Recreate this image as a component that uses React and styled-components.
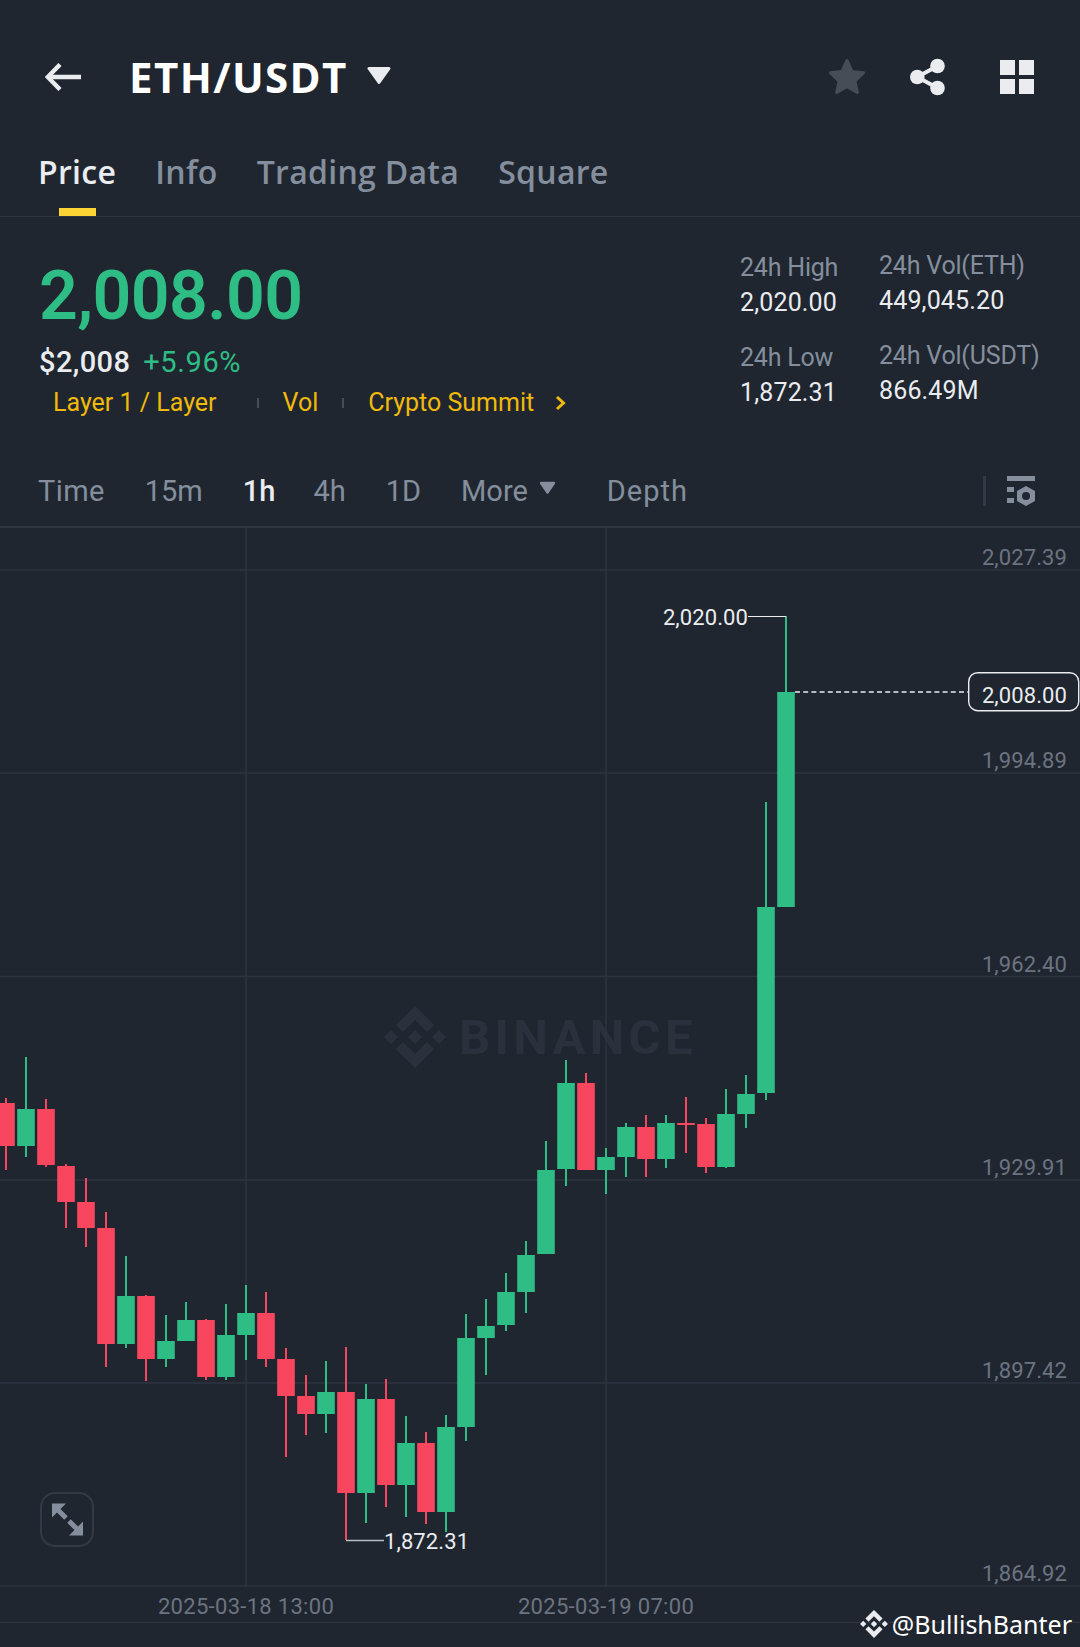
import React from "react";
import styled, { createGlobalStyle } from "styled-components";

const GREEN = "#2ebd85";
const RED = "#f8465f";
const GRID = "#2e353f";
const BG = "#1f2630";

const Global = createGlobalStyle`
  html, body { margin: 0; padding: 0; background: ${BG}; }
  * { box-sizing: border-box; }
`;

const Page = styled.div`
  position: relative;
  width: 1080px;
  height: 1647px;
  overflow: hidden;
  background: ${BG};
  display: flex;
  flex-direction: column;
  font-family: Roboto, "Liberation Sans", sans-serif;
  color: #eaecef;
`;

const TopBar = styled.header`
  height: 154px;
  display: flex;
  align-items: center;
  padding: 0 46px 0 45px;
`;
const Title = styled.h1`
  margin: 0 0 0 48px;
  font-family: "Open Sans", Roboto, sans-serif;
  font-size: 42px;
  font-weight: 700;
  letter-spacing: 1.4px;
  line-height: 48px;
  color: #fff;
`;
const TitleCaret = styled.svg`
  margin-left: 19px;
  width: 24px;
  height: 19px;
  margin-top: -4px;
`;
const TopIcons = styled.div`
  margin-left: auto;
  display: flex;
  align-items: center;
  gap: 44px;
`;
const GridIcon = styled.svg`
  margin-left: 11px;
`;

const TabRow = styled.nav`
  height: 63px;
  display: flex;
  padding: 0 0 0 38px;
  gap: 39px;
  border-bottom: 1px solid ${GRID};
`;
const Tab = styled.div`
  position: relative;
  font-family: "Open Sans", Roboto, sans-serif;
  font-size: 32px;
  font-weight: 600;
  letter-spacing: 0.3px;
  line-height: 36px;
  color: ${(p) => (p.$active ? "#eaecef" : "#848e9c")};
  ${(p) =>
    p.$active &&
    `&::after {
      content: "";
      position: absolute;
      left: 21px;
      top: 54px;
      width: 37px;
      height: 8px;
      background: #fcd535;
    }`}
`;

const Info = styled.section`
  height: 239px;
  display: flex;
  justify-content: space-between;
`;
const PriceBlock = styled.div`
  padding: 45px 0 0 39px;
`;
const BigPrice = styled.div`
  font-size: 68px;
  font-weight: 600;
  line-height: 68px;
  letter-spacing: -0.6px;
  color: ${GREEN};
`;
const SubRow = styled.div`
  margin-top: 17px;
  display: flex;
  gap: 13px;
  font-size: 29px;
  line-height: 30px;
  font-weight: 400;
`;
const Fiat = styled.span`
  color: #eaecef;
  font-weight: 500;
  letter-spacing: 0.4px;
`;
const Change = styled.span`
  color: ${GREEN};
  letter-spacing: 0.6px;
`;
const Tags = styled.div`
  margin: 12px 0 0 14px;
  display: flex;
  align-items: center;
  font-size: 25px;
  line-height: 28px;
  color: #f0b90b;
`;
const TagSep = styled.span`
  width: 2px;
  height: 10px;
  background: #474d57;
  margin: 0 24px 0 ${(p) => p.$left || 24}px;
`;
const Chevron = styled.svg`
  margin-left: 21px;
  width: 11px;
  height: 16px;
`;
const Stats = styled.div`
  width: 340px;
  display: grid;
  grid-template-columns: 139px 1fr;
`;
const StatCol = styled.div`
  padding-top: ${(p) => p.$top}px;
`;
const Stat = styled.div`
  height: 90px;
`;
const StatLabel = styled.div`
  font-size: 25px;
  line-height: 35px;
  letter-spacing: -0.2px;
  color: #848e9c;
`;
const StatValue = styled.div`
  font-size: 25px;
  line-height: 35px;
  letter-spacing: 0.15px;
  color: #eaecef;
`;

const TimeRow = styled.div`
  height: 72px;
  display: flex;
  align-items: center;
  padding: 0 44px 1px 38px;
  gap: 40px;
  border-bottom: 2px solid ${GRID};
  font-size: 29px;
  color: #848e9c;
`;
const Interval = styled.span`
  color: ${(p) => (p.$active ? "#eaecef" : "#848e9c")};
  font-weight: ${(p) => (p.$active ? 500 : 400)};
  margin-left: ${(p) => p.$ml || 0}px;
  letter-spacing: ${(p) => p.$ls || 0}px;
  display: inline-flex;
  align-items: flex-start;
`;
const MoreCaret = styled.svg`
  width: 17px;
  height: 14px;
  margin: 7px 0 0 11px;
`;
const RowTools = styled.div`
  margin-left: auto;
  display: flex;
  align-items: center;
  gap: 20px;
`;
const RowSep = styled.span`
  width: 3px;
  height: 30px;
  background: #343a45;
`;

const ChartWrap = styled.div`
  position: relative;
  height: 1095px;
`;
const ChartSvg = styled.svg`
  display: block;
  width: 1080px;
  height: 1095px;
`;
const ExpandButton = styled.button`
  position: absolute;
  left: 40px;
  top: 964px;
  width: 54px;
  height: 55px;
  padding: 0;
  background: transparent;
  border: 2px solid #343a45;
  border-radius: 15px;
  display: flex;
  align-items: center;
  justify-content: center;
`;
const Credit = styled.div`
  position: absolute;
  right: 8px;
  bottom: 8px;
  display: flex;
  align-items: center;
  gap: 4px;
  font-family: "Noto Sans", "Open Sans", sans-serif;
  font-size: 25px;
  line-height: 30px;
  color: #fff;
`;

const BNB_PATH =
  "M38.73 53.2l24.59-24.58 24.6 24.6 14.3-14.31L63.32 0 24.42 38.9zM0 63.31l14.3-14.31 14.31 14.31-14.31 14.3zM38.73 73.41l24.59 24.59 24.6-24.6 14.31 14.29-38.9 38.91-38.91-38.88zM98 63.31l14.3-14.31 14.31 14.3-14.31 14.31zM77.83 63.3L63.32 48.78 52.59 59.51l-1.24 1.23-2.54 2.54 14.51 14.5 14.51-14.52z";

// [colour, wickTop, wickBottom, bodyTop, bodyBottom]; one candle every 20px from x=6
const CANDLES = [
  ["r", 1098, 1170, 1103, 1146],
  ["g", 1057, 1157, 1109, 1146],
  ["r", 1099, 1167, 1109, 1165],
  ["r", 1164, 1228, 1166, 1202],
  ["r", 1178, 1247, 1202, 1228],
  ["r", 1212, 1367, 1228, 1344],
  ["g", 1256, 1348, 1296, 1344],
  ["r", 1295, 1381, 1296, 1359],
  ["g", 1315, 1367, 1341, 1359],
  ["g", 1302, 1341, 1320, 1341],
  ["r", 1319, 1380, 1320, 1377],
  ["g", 1304, 1380, 1335, 1377],
  ["g", 1285, 1360, 1313, 1335],
  ["r", 1292, 1367, 1313, 1359],
  ["r", 1348, 1457, 1359, 1396],
  ["r", 1375, 1435, 1396, 1414],
  ["g", 1361, 1433, 1392, 1414],
  ["r", 1347, 1540, 1392, 1493],
  ["g", 1384, 1523, 1399, 1493],
  ["r", 1379, 1507, 1399, 1485],
  ["g", 1416, 1517, 1443, 1485],
  ["r", 1432, 1524, 1443, 1512],
  ["g", 1415, 1532, 1427, 1512],
  ["g", 1314, 1441, 1338, 1427],
  ["g", 1299, 1375, 1326, 1338],
  ["g", 1273, 1331, 1292, 1325],
  ["g", 1241, 1313, 1255, 1292],
  ["g", 1141, 1254, 1170, 1254],
  ["g", 1060, 1186, 1083, 1169],
  ["r", 1073, 1170, 1083, 1170],
  ["g", 1148, 1194, 1157, 1170],
  ["g", 1123, 1177, 1127, 1157],
  ["r", 1115, 1177, 1127, 1159],
  ["g", 1115, 1168, 1123, 1159],
  ["r", 1097, 1153, 1123, 1125],
  ["r", 1118, 1173, 1124, 1167],
  ["g", 1089, 1168, 1114, 1167],
  ["g", 1075, 1128, 1094, 1114],
  ["g", 802, 1100, 907, 1093],
  ["g", 616, 907, 692, 907],
];

const GRID_ROWS = [
  [570, "2,027.39"],
  [773, "1,994.89"],
  [976.5, "1,962.40"],
  [1180, "1,929.91"],
  [1383, "1,897.42"],
  [1586, "1,864.92"],
];

const AxisText = styled.text`
  font-family: Roboto, sans-serif;
  font-size: 22px;
  letter-spacing: ${(p) => p.$spacing || 0.1}px;
  fill: ${(p) => p.$fill || "#6c7480"};
`;
const WatermarkText = styled.text`
  font-family: Roboto, sans-serif;
  font-weight: 700;
  font-size: 49px;
  letter-spacing: 4.3px;
  fill: #2b313c;
`;

function Candle({ data, index }) {
  const [c, wt, wb, bt, bb] = data;
  const cx = 6 + index * 20;
  const color = c === "g" ? GREEN : RED;
  const top = Math.min(bt, bb);
  const bottom = Math.max(bt, bb);
  return (
    <g fill={color}>
      <rect x={cx - 1} y={wt} width={2} height={wb - wt} />
      <rect x={cx - 8.8} y={top} width={17.6} height={bottom - top} />
    </g>
  );
}

function Chart() {
  return (
    <ChartSvg viewBox="0 528 1080 1095">
      {GRID_ROWS.map(([y]) => (
        <line key={y} x1="0" x2="1080" y1={y} y2={y} stroke={GRID} strokeWidth="1.4" />
      ))}
      <line x1="0" x2="1080" y1="1622.5" y2="1622.5" stroke={GRID} strokeWidth="1.4" />
      <g transform="translate(384 1006) scale(0.49)" fill="#2b313c">
        <path d={BNB_PATH} />
      </g>
      <WatermarkText x="459" y="1054">BINANCE</WatermarkText>
      {[246, 606].map((x) => (
        <line key={x} x1={x} x2={x} y1="528" y2="1586" stroke={GRID} strokeWidth="1.4" />
      ))}
      {GRID_ROWS.map(([y, t]) => (
        <AxisText key={t} x="1067" y={y - 5} textAnchor="end">{t}</AxisText>
      ))}
      {CANDLES.map((d, i) => (
        <Candle key={i} data={d} index={i} />
      ))}
      <path d="M748 616.5H786" stroke="#eaecef" strokeWidth="1.2" fill="none" />
      <AxisText x="748" y="625" textAnchor="end" $fill="#eaecef">2,020.00</AxisText>
      <path d="M346 1540.5H384" stroke="#b7bdc6" strokeWidth="1.6" fill="none" />
      <AxisText x="384" y="1549" $fill="#eaecef">1,872.31</AxisText>
      <line x1="795" x2="968" y1="692" y2="692" stroke="#eaecef" strokeWidth="1.3" strokeDasharray="5 3.2" />
      <rect x="968.7" y="672.7" width="110" height="38" rx="9" fill={BG} stroke="#eaecef" strokeWidth="1.4" />
      <AxisText x="1067" y="703" textAnchor="end" $fill="#eaecef">2,008.00</AxisText>
      <AxisText x="246" y="1614" textAnchor="middle" $spacing={0.3}>2025-03-18 13:00</AxisText>
      <AxisText x="606" y="1614" textAnchor="middle" $spacing={0.3}>2025-03-19 07:00</AxisText>
    </ChartSvg>
  );
}

export default function App() {
  return (
    <Page>
      <Global />
      <TopBar>
        <svg width="36" height="28" viewBox="0 0 36 28" fill="none" stroke="#eaecef" strokeWidth="4.4">
          <path d="M36 14H3" />
          <path d="M15 1.5L2.8 14L15 26.5" />
        </svg>
        <Title>ETH/USDT</Title>
        <TitleCaret viewBox="0 0 24 19">
          <path d="M2 2.5H22L12 16.5Z" fill="#eaecef" stroke="#eaecef" strokeWidth="3" strokeLinejoin="round" />
        </TitleCaret>
        <TopIcons>
          <svg width="38" height="38" viewBox="0 0 38 38">
            <path
              d="M19 2.5L24 13.4L35.5 14.8L27 23L29.3 34.5L19 28.8L8.7 34.5L11 23L2.5 14.8L14 13.4Z"
              fill="#474d57"
              stroke="#474d57"
              strokeWidth="3"
              strokeLinejoin="round"
            />
          </svg>
          <svg width="35" height="38" viewBox="0 0 35 38">
            <g fill="#eaecef">
              <circle cx="27.5" cy="8" r="7.3" />
              <circle cx="7.3" cy="19" r="7.3" />
              <circle cx="27.5" cy="30" r="7.3" />
            </g>
            <path d="M27.5 8L7.3 19L27.5 30" stroke="#eaecef" strokeWidth="4" fill="none" />
          </svg>
          <GridIcon width="34" height="34" viewBox="0 0 34 34" fill="#eaecef">
            <rect x="0" y="0" width="15" height="15" />
            <rect x="19" y="0" width="15" height="15" />
            <rect x="0" y="19" width="15" height="15" />
            <rect x="19" y="19" width="15" height="15" />
          </GridIcon>
        </TopIcons>
      </TopBar>

      <TabRow>
        <Tab $active>Price</Tab>
        <Tab>Info</Tab>
        <Tab>Trading Data</Tab>
        <Tab>Square</Tab>
      </TabRow>

      <Info>
        <PriceBlock>
          <BigPrice>2,008.00</BigPrice>
          <SubRow>
            <Fiat>$2,008</Fiat>
            <Change>+5.96%</Change>
          </SubRow>
          <Tags>
            <span>Layer 1 / Layer</span>
            <TagSep $left={40} />
            <span>Vol</span>
            <TagSep />
            <span>Crypto Summit</span>
            <Chevron viewBox="0 0 11 16">
              <path d="M2 2L8.5 8L2 14" fill="none" stroke="#f0b90b" strokeWidth="3" />
            </Chevron>
          </Tags>
        </PriceBlock>
        <Stats>
          <StatCol $top={33}>
            <Stat>
              <StatLabel>24h High</StatLabel>
              <StatValue>2,020.00</StatValue>
            </Stat>
            <Stat>
              <StatLabel>24h Low</StatLabel>
              <StatValue>1,872.31</StatValue>
            </Stat>
          </StatCol>
          <StatCol $top={31}>
            <Stat>
              <StatLabel>24h Vol(ETH)</StatLabel>
              <StatValue>449,045.20</StatValue>
            </Stat>
            <Stat>
              <StatLabel>24h Vol(USDT)</StatLabel>
              <StatValue>866.49M</StatValue>
            </Stat>
          </StatCol>
        </Stats>
      </Info>

      <TimeRow>
        <Interval $ls={0.4}>Time</Interval>
        <Interval>15m</Interval>
        <Interval $active>1h</Interval>
        <Interval $ml={-2}>4h</Interval>
        <Interval>1D</Interval>
        <Interval>
          More
          <MoreCaret viewBox="0 0 17 14">
            <path d="M2 2H15L8.5 11.5Z" fill="#848e9c" stroke="#848e9c" strokeWidth="2.4" strokeLinejoin="round" />
          </MoreCaret>
        </Interval>
        <Interval $ml={11} $ls={1}>Depth</Interval>
        <RowTools>
          <RowSep />
          <svg width="30" height="30" viewBox="0 0 30 30" fill="#848e9c">
            <rect x="1" y="0" width="28" height="5" />
            <rect x="1" y="11" width="7" height="5" />
            <rect x="1" y="22" width="7" height="5" />
            <path
              fillRule="evenodd"
              d="M20 10L29 15V25L20 30L11 25V15ZM20 16a4 4 0 1 0 0 8a4 4 0 1 0 0-8Z"
            />
          </svg>
        </RowTools>
      </TimeRow>

      <ChartWrap>
        <Chart />
        <ExpandButton aria-label="Expand">
          <svg width="34" height="34" viewBox="0 0 34 34" fill="#848e9c">
            <path d="M2 0.5H16L2 14.5Z" />
            <path d="M6 5L16 15" stroke="#848e9c" strokeWidth="5" />
            <path d="M33 32.5H19L33 18.5Z" />
            <path d="M29 28L19 18" stroke="#848e9c" strokeWidth="5" />
          </svg>
        </ExpandButton>
      </ChartWrap>

      <Credit>
        <svg width="28" height="28" viewBox="0 0 126.61 127" fill="#eaecef">
          <path d={BNB_PATH} />
        </svg>
        <span>@BullishBanter</span>
      </Credit>
    </Page>
  );
}
